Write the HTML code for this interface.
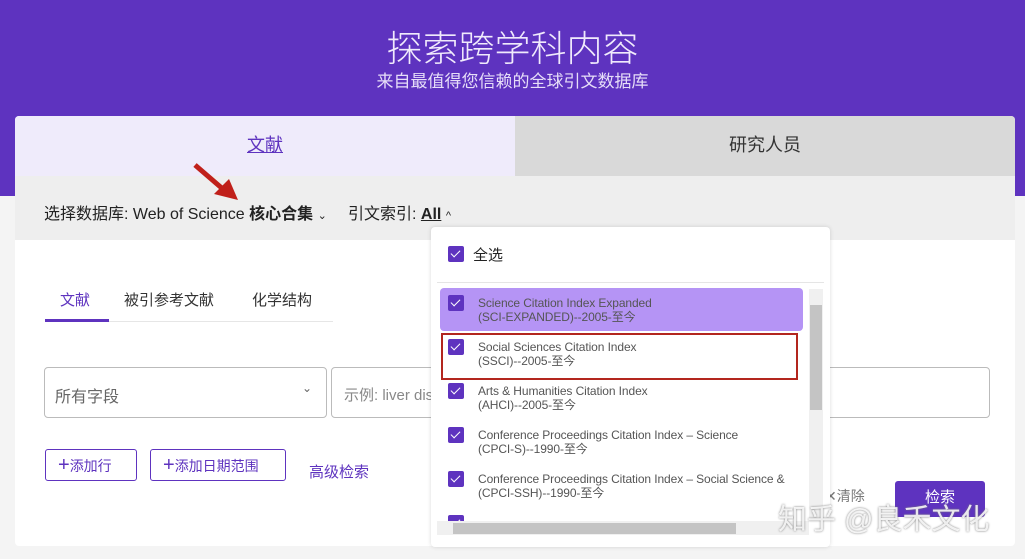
<!DOCTYPE html>
<html><head><meta charset="utf-8"><style>
*{box-sizing:border-box;margin:0;padding:0}
body{width:1025px;height:559px;overflow:hidden;background:#f4f4f4;font-family:"Liberation Sans","Noto Sans CJK SC",sans-serif;position:relative;color:#333}
.hdr{position:absolute;left:0;top:0;width:1025px;height:196px;background:#5e33bf}
.t1{position:absolute;top:20px;width:1025px;text-align:center;color:#f0eafc;font-size:36px;font-weight:300}
.t2{position:absolute;top:67px;width:1025px;text-align:center;color:#e6ddf8;font-size:17px}
.card{position:absolute;left:15px;top:116px;width:1000px;height:430px;background:#fff;border-radius:4px;overflow:hidden}
.tabA{position:absolute;left:0;top:0;width:500px;height:60px;background:#efebfb;text-align:center;line-height:58px;font-size:18px;color:#5e33bf;text-decoration:underline}
.tabB{position:absolute;left:500px;top:0;width:500px;height:60px;background:#d9d9d9;text-align:center;line-height:58px;font-size:18px;color:#333}
.band{position:absolute;left:0;top:60px;width:1000px;height:64px;background:#eeeeee;font-size:16px;color:#222}
.abs{position:absolute}
.cb{position:absolute;width:16px;height:16px;background:#5e33bf;border-radius:2px}
.cb:after{content:"";position:absolute;left:5px;top:2px;width:4px;height:8px;border:solid #fff;border-width:0 1.5px 1.5px 0;transform:rotate(45deg)}
.item{position:absolute;left:47px;font-size:12px;line-height:14px;color:#555;letter-spacing:-0.1px}
.btn{position:absolute;border:1px solid #5e33bf;border-radius:3px;color:#5e33bf;font-size:14px;height:32px;line-height:30px}
</style></head><body>
<div class="hdr"></div>
<div class="t1">探索跨学科内容</div>
<div class="t2">来自最值得您信赖的全球引文数据库</div>
<div class="card">
 <div class="tabA">文献</div>
 <div class="tabB">研究人员</div>
 <div class="band">
  <div class="abs" style="left:29px;top:24px">选择数据库: Web of Science <b>核心合集</b> <span style="font-size:11px">⌄</span></div>
  <div class="abs" style="left:333px;top:24px">引文索引: <u style="font-weight:bold">All</u> <span style="font-size:11px">^</span></div>
 </div>
 <div class="abs" style="left:30px;top:205px;width:288px;height:1px;background:#e6e6e6"></div>
 <div class="abs" style="left:30px;top:203px;width:64px;height:3px;background:#5e33bf"></div>
 <div class="abs" style="left:45px;top:173px;font-size:15px;color:#5e33bf">文献</div>
 <div class="abs" style="left:109px;top:173px;font-size:15px">被引参考文献</div>
 <div class="abs" style="left:237px;top:173px;font-size:15px">化学结构</div>
 <div class="abs" style="left:29px;top:251px;width:283px;height:51px;border:1px solid #bbb;border-radius:4px;font-size:16px;color:#666;padding:15px 10px">所有字段<span style="position:absolute;right:14px;top:13px;font-size:12px">⌄</span></div>
 <div class="abs" style="left:316px;top:251px;width:659px;height:51px;border:1px solid #bbb;border-radius:4px;font-size:15px;color:#888;padding:16px 12px">示例: liver disease</div>
 <div class="btn" style="left:30px;top:333px;width:92px;padding-left:12px"><b style="font-size:20px;font-weight:400">+</b>添加行</div>
 <div class="btn" style="left:135px;top:333px;width:136px;padding-left:12px"><b style="font-size:20px;font-weight:400">+</b>添加日期范围</div>
 <div class="abs" style="left:294px;top:345px;font-size:15px;color:#5e33bf">高级检索</div>
 <div class="abs" style="left:810px;top:370px;font-size:14px;color:#777">✕清除</div>
 <div class="abs" style="left:880px;top:365px;width:90px;height:36px;background:#5e33bf;border-radius:3px;color:#fff;text-align:center;line-height:34px;font-size:15px">检索</div>
</div>
<div class="abs" style="left:431px;top:227px;width:399px;height:320px;background:#fff;border-radius:4px;box-shadow:0 0 4px rgba(0,0,0,.15)">
 <div class="cb" style="left:17px;top:19px"></div>
 <div class="abs" style="left:42px;top:17px;font-size:15px;color:#222">全选</div>
 <div class="abs" style="left:6px;top:55px;width:387px;height:1px;background:#e5e5e5"></div>
 <div class="abs" style="left:9px;top:61px;width:363px;height:43px;background:#b594f5;border-radius:4px"></div>
 <div class="abs" style="left:10px;top:106px;width:357px;height:47px;border:2px solid #b3261e"></div>
 <div class="cb" style="left:17px;top:68px"></div><div class="item" style="top:69px">Science Citation Index Expanded<br>(SCI-EXPANDED)--2005-至今</div>
 <div class="cb" style="left:17px;top:112px"></div><div class="item" style="top:113px">Social Sciences Citation Index<br>(SSCI)--2005-至今</div>
 <div class="cb" style="left:17px;top:156px"></div><div class="item" style="top:157px">Arts &amp; Humanities Citation Index<br>(AHCI)--2005-至今</div>
 <div class="cb" style="left:17px;top:200px"></div><div class="item" style="top:201px">Conference Proceedings Citation Index – Science<br>(CPCI-S)--1990-至今</div>
 <div class="cb" style="left:17px;top:244px"></div><div class="item" style="top:245px;white-space:nowrap;width:330px;overflow:hidden">Conference Proceedings Citation Index – Social Science &amp;<br>(CPCI-SSH)--1990-至今</div>
 <div class="cb" style="left:17px;top:288px;height:8px"></div>
 <div class="abs" style="left:378px;top:62px;width:14px;height:232px;background:#f0f0f0"></div>
 <div class="abs" style="left:379px;top:78px;width:12px;height:105px;background:#c4c4c4"></div>
 <div class="abs" style="left:6px;top:294px;width:372px;height:14px;background:#f0f0f0"></div>
 <div class="abs" style="left:22px;top:296px;width:283px;height:11px;background:#c4c4c4"></div>
</div>
<svg class="abs" style="left:192px;top:162px" width="50" height="42"><line x1="3" y1="3" x2="32" y2="28" stroke="#c0201a" stroke-width="5"/><polygon points="46,38 22,32 37,17" fill="#c0201a"/></svg>
<div class="abs" style="left:778px;top:496px;font-size:29px;color:rgba(255,255,255,.85);text-shadow:0 0 2px #777">知乎 @良禾文化</div>
</body></html>
